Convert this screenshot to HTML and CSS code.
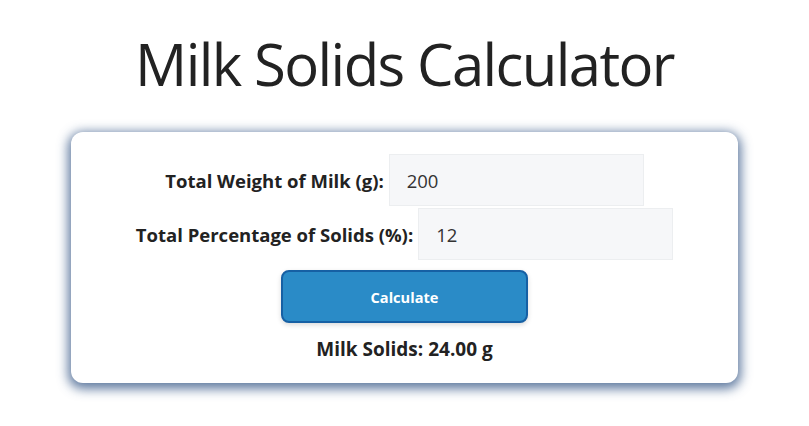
FILE: index.html
```html
<!DOCTYPE html>
<html lang="en">
<head>
<meta charset="utf-8">
<title>Milk Solids Calculator</title>
<link rel="stylesheet" href="styles.css">
</head>
<body>
<h1 class="title">Milk Solids Calculator</h1>
<div class="card">
  <div class="row">
    <label class="label" for="weight">Total Weight of Milk (g):</label>
    <input class="field" id="weight" type="text" value="200">
  </div>
  <div class="row">
    <label class="label" for="pct">Total Percentage of Solids (%):</label>
    <input class="field" id="pct" type="text" value="12">
  </div>
  <button class="btn" type="button">Calculate</button>
  <div class="result">Milk Solids: 24.00 g</div>
</div>
</body>
</html>
```

FILE: styles.css
```css
html {
  background: #ffffff;
}
body {
  margin: 0;
  padding-bottom: 40px;
  min-height: 426px;
  box-sizing: border-box;
  background: #ffffff;
  color: #222222;
  font-family: "Open Sans", "Noto Sans", "Liberation Sans", sans-serif;
}
.title {
  margin: 22px 0 0;
  text-align: center;
  font-weight: 400;
  font-size: 58px;
  line-height: 84px;
  letter-spacing: -1.6px;
  color: #222222;
}
.card {
  box-sizing: border-box;
  width: 667px;
  margin: 26px auto 0;
  padding: 22px 20px 22px;
  background: #ffffff;
  border-radius: 12px;
  box-shadow: 0 3px 11px 3px rgba(45, 80, 130, 0.75);
  display: flex;
  flex-direction: column;
  align-items: center;
}
.row {
  display: flex;
  align-items: center;
  gap: 5px;
  margin-bottom: 2px;
}
.label {
  font-weight: 700;
  font-size: 18.5px;
  color: #222222;
}
.field {
  box-sizing: border-box;
  width: 255px;
  height: 52px;
  padding: 0 17px;
  background: #f6f7f9;
  border: 1px solid #eceef0;
  font-family: inherit;
  font-size: 18.5px;
  color: #333333;
  outline: none;
}
.btn {
  box-sizing: border-box;
  width: 247px;
  height: 53px;
  margin-top: 8px;
  background: #2a8bc7;
  border: 2px solid #1660a4;
  border-radius: 8px;
  color: #ffffff;
  font-family: inherit;
  font-weight: 700;
  font-size: 14.6px;
  box-shadow: 0 2px 5px rgba(0, 0, 0, 0.15);
}
.result {
  margin-top: 14px;
  font-weight: 700;
  font-size: 19px;
  line-height: 24px;
  color: #222222;
}
```
